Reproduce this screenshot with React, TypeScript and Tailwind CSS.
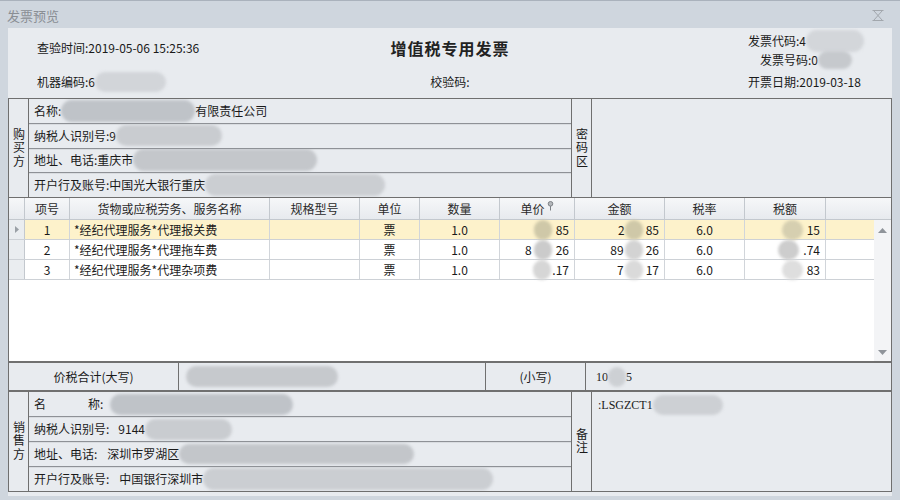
import React from "react";

const bl = "inline-block shrink-0 rounded-full blur-[1.5px]";

function VLabel({ text }: { text: string }) {
  return (
    <div className="[writing-mode:vertical-rl] text-[12px] leading-[14px] tracking-[1.5px]">{text}</div>
  );
}

function Row({ children, last }: { children: React.ReactNode; last?: boolean }) {
  return (
    <div
      className={
        "flex-1 flex items-center pl-[5px] whitespace-nowrap overflow-hidden " +
        (last ? "" : "border-b border-[#8e9196] shadow-[0_1px_0_#d9dce0]")
      }
    >
      {children}
    </div>
  );
}

type Item = {
  no: string;
  name: string;
  hl: boolean;
  price: React.ReactNode;
  amount: React.ReactNode;
  tax: React.ReactNode;
};

export default function App() {
  const items: Item[] = [
    {
      no: "1",
      name: "*经纪代理服务*代理报关费",
      hl: true,
      price: (
        <>
          <span className={bl + " w-[18px] h-[20px] bg-[#cfc8a8]"} />
          <span className="ml-[4px]">85</span>
        </>
      ),
      amount: (
        <>
          <span>2</span>
          <span className={bl + " w-[18px] h-[20px] bg-[#cfc8a8]"} />
          <span className="ml-[3px]">85</span>
        </>
      ),
      tax: (
        <>
          <span className={bl + " w-[21px] h-[20px] bg-[#d6cfb0]"} />
          <span className="ml-[4px]">15</span>
        </>
      ),
    },
    {
      no: "2",
      name: "*经纪代理服务*代理拖车费",
      hl: false,
      price: (
        <>
          <span>8</span>
          <span className={bl + " w-[18px] h-[20px] ml-[2px] bg-[#cbcbcb]"} />
          <span className="ml-[4px]">26</span>
        </>
      ),
      amount: (
        <>
          <span>89</span>
          <span className={bl + " w-[18px] h-[20px] ml-[1px] bg-[#d3d3d3]"} />
          <span className="ml-[3px]">26</span>
        </>
      ),
      tax: (
        <>
          <span className={bl + " w-[21px] h-[20px] bg-[#cdcdcd]"} />
          <span className="ml-[4px]">.74</span>
        </>
      ),
    },
    {
      no: "3",
      name: "*经纪代理服务*代理杂项费",
      hl: false,
      price: (
        <>
          <span className={bl + " w-[18px] h-[20px] bg-[#d6d6d6]"} />
          <span className="ml-[1px]">.17</span>
        </>
      ),
      amount: (
        <>
          <span>7</span>
          <span className={bl + " w-[18px] h-[20px] ml-[1px] bg-[#dadada]"} />
          <span className="ml-[3px]">17</span>
        </>
      ),
      tax: (
        <>
          <span className={bl + " w-[21px] h-[20px] bg-[#dedede]"} />
          <span className="ml-[4px]">83</span>
        </>
      ),
    },
  ];

  return (
    <div className="w-[900px] h-[500px] bg-[#cfd6de] flex flex-col font-['Noto_Sans_CJK_SC','Noto_Sans',sans-serif] text-[12px] text-[#1a1a1a] overflow-hidden">
      {/* title bar */}
      <div className="h-[28px] shrink-0 border-t border-[#aab2bc] flex items-center justify-between pl-[7px] pr-[16px]">
        <span className="text-[13px] text-[#8a8e94] leading-[16px] mt-[2px]">发票预览</span>
        <svg width="12" height="11" viewBox="0 0 12 11" className="mt-[2px]">
          <g stroke="#a2a7ad" strokeWidth="1" fill="none">
            <line x1="0.5" y1="0.5" x2="11.5" y2="0.5" />
            <line x1="0.5" y1="10.5" x2="11.5" y2="10.5" />
            <line x1="2" y1="1" x2="10" y2="10" />
            <line x1="10" y1="1" x2="2" y2="10" />
          </g>
        </svg>
      </div>

      {/* panel */}
      <div className="ml-[8px] w-[884px] h-[468px] bg-[#e8ebef] flex flex-col pb-[4px]">
        {/* header */}
        <div className="flex h-[70px] shrink-0 leading-[16px]">
          <div className="w-[300px] pl-[29px] pt-[12px]">
            <div className="h-[16px] flex items-center">查验时间:2019-05-06 15:25:36</div>
            <div className="mt-[18px] h-[16px] flex items-center">
              机器编码:6
              <span className={bl + " w-[71px] h-[20px] bg-[#d2d5d9]"} />
            </div>
          </div>
          <div className="w-[284px] flex flex-col items-center pt-[10px]">
            <div className="text-[16px] leading-[20px] font-bold tracking-[1px] text-[#222]">增值税专用发票</div>
            <div className="mt-[16px] h-[16px] flex items-center">校验码:</div>
          </div>
          <div className="flex-1 pl-[156px] pt-[5px]">
            <div className="h-[16px] flex items-center">
              发票代码:4
              <span className={bl + " w-[58px] h-[22px] bg-[#d3d6da]"} />
            </div>
            <div className="mt-[3px] h-[16px] pl-[12px] flex items-center">
              发票号码:0
              <span className={bl + " w-[34px] h-[18px] bg-[#c6c9cd]"} />
            </div>
            <div className="mt-[6px] h-[16px] flex items-center">开票日期:2019-03-18</div>
          </div>
        </div>

        {/* bordered form */}
        <div className="flex flex-col border border-[#6f6f6f]">
          {/* buyer */}
          <div className="flex h-[99px] border-b border-[#6f6f6f]">
            <div className="w-[20px] border-r border-[#6f6f6f] flex items-center justify-center">
              <VLabel text="购买方" />
            </div>
            <div className="w-[543px] border-r border-[#6f6f6f] flex flex-col">
              <Row>
                名称:
                <span className={bl + " w-[134px] h-[22px] bg-[#bfc3c8]"} />
                有限责任公司
              </Row>
              <Row>
                纳税人识别号:9
                <span className={bl + " w-[106px] h-[21px] bg-[#c9ccd0]"} />
              </Row>
              <Row>
                地址、电话:重庆市
                <span className={bl + " w-[184px] h-[22px] bg-[#c4c7cb]"} />
              </Row>
              <Row last>
                开户行及账号:中国光大银行重庆
                <span className={bl + " w-[180px] h-[22px] bg-[#cbced2]"} />
              </Row>
            </div>
            <div className="w-[20px] border-r border-[#6f6f6f] flex items-center justify-center">
              <VLabel text="密码区" />
            </div>
            <div className="flex-1" />
          </div>

          {/* goods table */}
          <div className="h-[163px] flex flex-col">
            <div className="h-[22px] shrink-0 flex border-b border-[#c3c8ce] bg-gradient-to-b from-[#f6f7f9] to-[#e7eaee] text-[#2a2a2a]">
              <div className="w-[16px] border-r border-[#c3c8ce]" />
              <div className="w-[45px] border-r border-[#c3c8ce] flex items-center justify-center">项号</div>
              <div className="w-[200px] border-r border-[#c3c8ce] flex items-center justify-center">货物或应税劳务、服务名称</div>
              <div className="w-[90px] border-r border-[#c3c8ce] flex items-center justify-center">规格型号</div>
              <div className="w-[60px] border-r border-[#c3c8ce] flex items-center justify-center">单位</div>
              <div className="w-[80px] border-r border-[#c3c8ce] flex items-center justify-center">数量</div>
              <div className="w-[75px] border-r border-[#c3c8ce] flex items-center justify-center relative">
                单价
                <svg width="7" height="10" viewBox="0 0 7 10" className="ml-[2px] -mt-[5px]">
                  <circle cx="3.5" cy="2.8" r="2.3" fill="#b5b8bc" stroke="#7d8186" strokeWidth="1" />
                  <line x1="3.5" y1="5" x2="3.5" y2="9.5" stroke="#7d8186" strokeWidth="1" />
                </svg>
              </div>
              <div className="w-[90px] border-r border-[#c3c8ce] flex items-center justify-center">金额</div>
              <div className="w-[80px] border-r border-[#c3c8ce] flex items-center justify-center">税率</div>
              <div className="w-[81px] border-r border-[#c3c8ce] flex items-center justify-center">税额</div>
              <div className="flex-1" />
            </div>
            <div className="flex-1 flex">
              <div className="flex-1 bg-white flex flex-col">
                {items.map((it) => (
                  <div
                    key={it.no}
                    className={
                      "h-[20px] flex border-b border-[#cdd1d6] " + (it.hl ? "bg-[#fdf2cb]" : "bg-white")
                    }
                  >
                    <div className="w-[16px] bg-[#eaedf0] border-r border-[#c3c8ce] flex items-center justify-center">
                      {it.hl && (
                        <svg width="4" height="7" viewBox="0 0 4 7">
                          <polygon points="0,0 4,3.5 0,7" fill="#9aa0a6" />
                        </svg>
                      )}
                    </div>
                    <div className="w-[45px] border-r border-[#d1d5da] flex items-center justify-center">{it.no}</div>
                    <div className="w-[200px] border-r border-[#d1d5da] flex items-center pl-[4px] whitespace-nowrap">{it.name}</div>
                    <div className="w-[90px] border-r border-[#d1d5da]" />
                    <div className="w-[60px] border-r border-[#d1d5da] flex items-center justify-center">票</div>
                    <div className="w-[80px] border-r border-[#d1d5da] flex items-center justify-center">1.0</div>
                    <div className="w-[75px] border-r border-[#d1d5da] flex items-center justify-end pr-[5px]">{it.price}</div>
                    <div className="w-[90px] border-r border-[#d1d5da] flex items-center justify-end pr-[5px]">{it.amount}</div>
                    <div className="w-[80px] border-r border-[#d1d5da] flex items-center justify-center">6.0</div>
                    <div className="w-[81px] border-r border-[#d1d5da] flex items-center justify-end pr-[5px]">{it.tax}</div>
                    <div className="flex-1" />
                  </div>
                ))}
              </div>
              <div className="w-[17px] bg-[#f3f4f6] flex flex-col items-center justify-between pt-[8px] pb-[6px]">
                <svg width="9" height="5" viewBox="0 0 9 5">
                  <polygon points="0,5 4.5,0 9,5" fill="#8f949a" />
                </svg>
                <svg width="9" height="5" viewBox="0 0 9 5">
                  <polygon points="0,0 9,0 4.5,5" fill="#8f949a" />
                </svg>
              </div>
            </div>
          </div>

          {/* total */}
          <div className="h-[31px] flex border-y-2 border-[#707070]">
            <div className="w-[170px] border-r border-[#707070] flex items-center justify-center">价税合计(大写)</div>
            <div className="w-[307px] border-r border-[#707070] flex items-center pl-[7px]">
              <span className={bl + " w-[152px] h-[21px] bg-[#c6c9cd]"} />
            </div>
            <div className="w-[100px] border-r border-[#707070] flex items-center justify-center">(小写)</div>
            <div className="flex-1 flex items-center pl-[10px] font-['Liberation_Serif',serif]">
              10
              <span className={bl + " w-[18px] h-[20px] bg-[#cdd0d4]"} />
              5
            </div>
          </div>

          {/* seller */}
          <div className="flex h-[99px]">
            <div className="w-[20px] border-r border-[#6f6f6f] flex items-center justify-center">
              <VLabel text="销售方" />
            </div>
            <div className="w-[543px] border-r border-[#6f6f6f] flex flex-col">
              <Row>
                名<span className="inline-block w-[42px]" />称:
                <span className={bl + " ml-[7px] w-[183px] h-[21px] bg-[#bfc3c8]"} />
              </Row>
              <Row>
                纳税人识别号:<span className="ml-[9px]">9144</span>
                <span className={bl + " w-[87px] h-[21px] bg-[#c9ccd0]"} />
              </Row>
              <Row>
                地址、电话:<span className="ml-[10px]">深圳市罗湖区</span>
                <span className={bl + " w-[235px] h-[20px] bg-[#c3c6ca]"} />
              </Row>
              <Row last>
                开户行及账号:<span className="ml-[10px]">中国银行深圳市</span>
                <span className={bl + " w-[290px] h-[22px] bg-[#cbced2]"} />
              </Row>
            </div>
            <div className="w-[20px] border-r border-[#6f6f6f] flex items-center justify-center">
              <VLabel text="备注" />
            </div>
            <div className="flex-1 pl-[6px] pt-[5px]">
              <div className="flex items-center h-[16px] font-['Liberation_Serif',serif] text-[12px]">
                :LSGZCT1
                <span className={bl + " w-[70px] h-[20px] bg-[#cdd0d4]"} />
              </div>
            </div>
          </div>
        </div>
      </div>
    </div>
  );
}
